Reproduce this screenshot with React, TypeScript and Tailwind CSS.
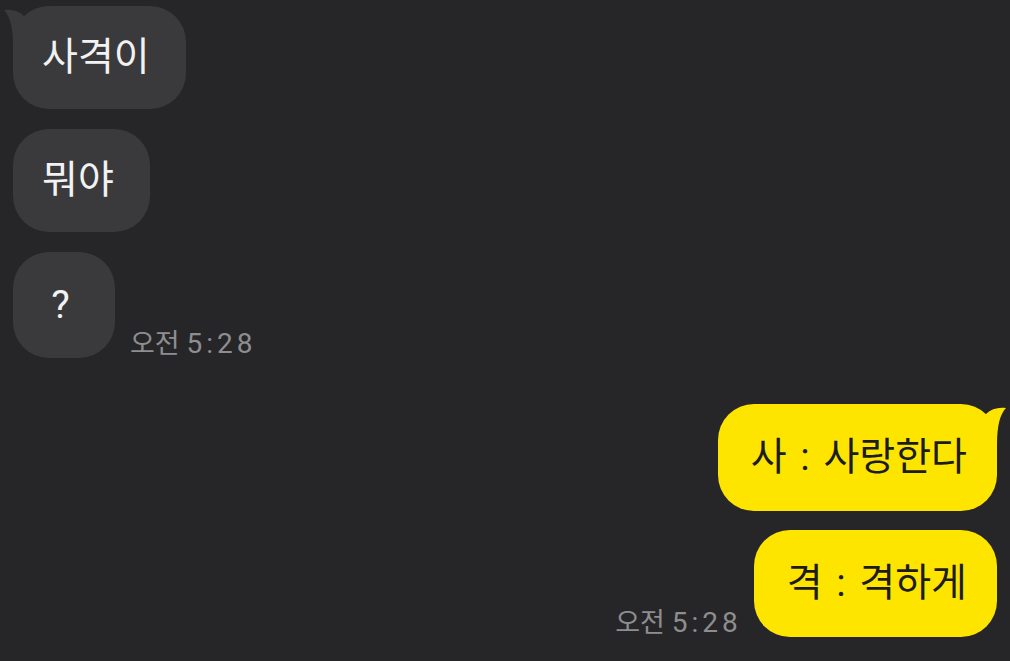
import React from 'react';

const FONT = 'Roboto, "Noto Sans CJK KR", "Noto Sans", sans-serif';

const Tail: React.FC<{ color: string; side: 'left' | 'right' }> = ({ color, side }) => (
  <svg
    width="30"
    height="40"
    viewBox="0 0 30 40"
    className={
      side === 'left'
        ? 'absolute top-0 left-[-9px] overflow-visible'
        : 'absolute top-0 right-[-9px] overflow-visible -scale-x-100'
    }
  >
    <path d="M0 4 C 8 3, 15 5, 20 10 L 28 40 L 9 40 C 9 22, 6 10, 0 4 Z" fill={color} />
  </svg>
);

const Bubble: React.FC<{ text: string; mine?: boolean; tail?: boolean; className?: string }> = ({
  text,
  mine,
  tail,
  className = 'h-[103px]',
}) => (
  <div
    className={
      'relative min-w-[102px] rounded-[36px] flex items-center justify-center text-[39px] leading-none [word-spacing:4px] ' +
      className +
      ' ' +
      (mine ? 'bg-[#fee500] text-[#1c1c1c] pl-[33px] pr-[30px]' : 'bg-[#3a3a3c] text-[#f2f2f2] pl-[29px] pr-[36px]')
    }
    style={{ fontFamily: FONT }}
  >
    {tail && <Tail color={mine ? '#fee500' : '#3a3a3c'} side={mine ? 'right' : 'left'} />}
    <span className="relative">{text}</span>
  </div>
);

const Time: React.FC = () => (
  <span className="text-[27px] leading-none text-[#8e8e90] whitespace-nowrap" style={{ fontFamily: FONT }}>
    오전 <span className="tracking-[4px] text-[28px]">5:28</span>
  </span>
);

export default function App() {
  return (
    <div className="w-[1010px] h-[661px] bg-[#262628] overflow-hidden px-[13px] pt-[6px] flex flex-col">
      <div className="flex flex-col items-start gap-[20px]">
        <Bubble text="사격이" tail />
        <Bubble text="뭐야" />
        <div className="flex items-end gap-[15px]">
          <Bubble text="?" className="h-[106px]" />
          <Time />
        </div>
      </div>
      <div className="flex flex-col items-end gap-[19px] mt-[46px]">
        <Bubble text="사 : 사랑한다" mine tail className="h-[107px]" />
        <div className="flex items-end gap-[12px]">
          <Time />
          <Bubble text="격 : 격하게" mine className="h-[107px]" />
        </div>
      </div>
    </div>
  );
}
